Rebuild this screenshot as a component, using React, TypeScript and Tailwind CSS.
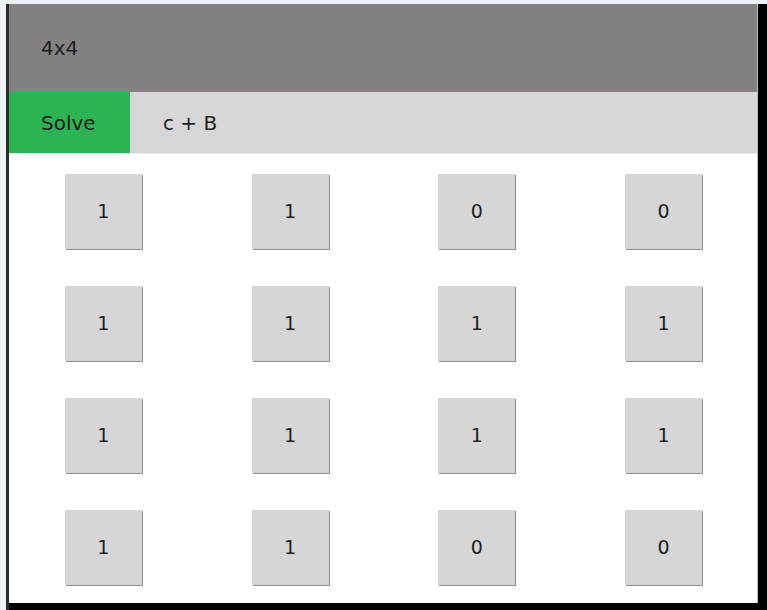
import React from "react";

const grid = [
  [1, 1, 0, 0],
  [1, 1, 1, 1],
  [1, 1, 1, 1],
  [1, 1, 0, 0],
];

export default function App() {
  return (
    <div
      className="h-[610px] w-[767px] bg-[#eef2f5] pt-[4px] pl-[6px] overflow-hidden"
      style={{ fontFamily: '"DejaVu Sans", sans-serif' }}
    >
      <div className="w-[761px] h-[606px] bg-black border-l-[3px] border-[#2a2a2a]">
        <div className="w-[749px] h-[599px] bg-white border-r border-[#bdbdbd] flex flex-col">
          <div className="h-[88px] bg-[#858183] flex items-center pl-[32px] text-[20px] text-[#1e1e1e]">
            4x4
          </div>
          <div className="h-[62px] flex border-b border-[#ececec]">
            <div className="w-[121px] bg-[#2bb552] flex items-center pl-[32px] text-[20px] text-[#1a1a1a]">
              Solve
            </div>
            <div className="flex-1 bg-[#d7d7d7] flex items-center pl-[33px] text-[20px] text-[#222]">
              c + B
            </div>
          </div>
          <div className="flex-1 grid grid-cols-4 grid-rows-4 pl-[1px] pt-[1px]">
            {grid.flat().map((v, i) => (
              <div key={i} className="flex items-center justify-center">
                <div className="w-[77px] h-[75px] bg-[#d6d6d6] flex items-center justify-center text-[19px] text-[#1e1e1e] shadow-[1px_1px_0_#8f8f8f]">
                  {v}
                </div>
              </div>
            ))}
          </div>
        </div>
      </div>
    </div>
  );
}
